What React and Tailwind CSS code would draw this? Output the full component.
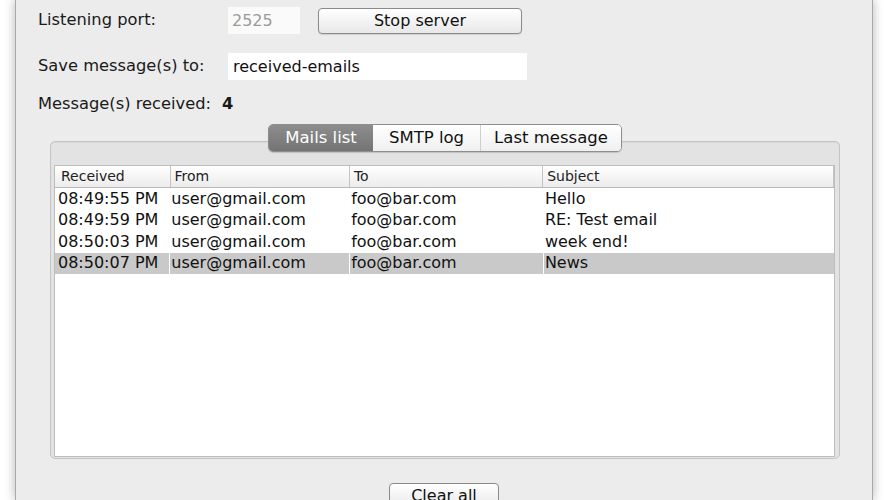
const font = { fontFamily: '"DejaVu Sans", "Liberation Sans", sans-serif' };

const columns = [
  { key: "received", title: "Received", width: "w-[115px]" },
  { key: "from", title: "From", width: "w-[180px]" },
  { key: "to", title: "To", width: "w-[194px]" },
  { key: "subject", title: "Subject", width: "w-[292px]" },
];

const mails = [
  { received: "08:49:55 PM", from: "user@gmail.com", to: "foo@bar.com", subject: "Hello" },
  { received: "08:49:59 PM", from: "user@gmail.com", to: "foo@bar.com", subject: "RE: Test email" },
  { received: "08:50:03 PM", from: "user@gmail.com", to: "foo@bar.com", subject: "week end!" },
  { received: "08:50:07 PM", from: "user@gmail.com", to: "foo@bar.com", subject: "News", selected: true },
];

function MailsTable() {
  return (
    <div className="mx-[3px] mr-[4px] mt-[22px] h-[292px] border border-[#bdbdbd] bg-white">
      <div className="flex h-[22px] border-b border-[#b8b8b8] bg-gradient-to-b from-white to-[#ececec] text-[14px] text-[#222]">
        {columns.map((col, i) => (
          <div
            key={col.key}
            className={`${col.width} flex items-center ${i === 0 ? "pl-[6px]" : "border-l border-[#c4c4c4] pl-[4px]"}`}
          >
            {col.title}
          </div>
        ))}
        <div className="flex-1 border-l border-[#c4c4c4]" />
      </div>
      {mails.map((mail) => (
        <div key={mail.received} className="flex h-[21.5px] text-[16px] text-[#111]">
          {columns.map((col, i) => (
            <div
              key={col.key}
              className={`${col.width} flex items-center ${mail.selected ? "bg-[#c9c9c9]" : ""} ${i === 0 ? "pl-[3px]" : "ml-px pl-[2px]"}`}
            >
              <span className={i === 0 ? "" : "-ml-px"}>{mail[col.key]}</span>
            </div>
          ))}
        </div>
      ))}
    </div>
  );
}

function Tabs() {
  const tabs = ["Mails list", "SMTP log", "Last message"];
  return (
    <div className="relative z-10 -mb-[11px] flex justify-center">
      <div className="flex h-[28px] overflow-hidden rounded-[5px] border border-[#8e8e8e] text-[16.5px] shadow-[0_1px_1px_rgba(0,0,0,0.15)]">
        {tabs.map((tab, i) => (
          <div
            key={tab}
            className={
              i === 0
                ? "flex w-[104px] items-center justify-center bg-gradient-to-b from-[#8d8d8d] to-[#747474] text-white"
                : `flex items-center justify-center bg-gradient-to-b from-white to-[#f0f0f0] text-[#111] ${
                    i === 1 ? "w-[107px]" : "w-[141px] border-l border-[#cfcfcf]"
                  }`
            }
          >
            {tab}
          </div>
        ))}
      </div>
    </div>
  );
}

export default function App() {
  return (
    <div className="h-[500px] w-[888px] overflow-hidden bg-white" style={font}>
      <div className="ml-[15px] h-[500px] w-[858px] border-x border-[#a9a9a9] bg-[#ececec] shadow-[0_0_10px_rgba(0,0,0,0.3)]">
        <div className="pl-[22px] pt-[7px] text-[16.3px] text-[#1a1a1a]">
          <div className="flex h-[27px] items-center">
            <div className="w-[190px]">Listening port:</div>
            <div className="flex h-[27px] w-[72px] items-center bg-[#fafafa] pl-[4px] text-[16px] text-[#9b9b9b]">
              2525
            </div>
            <button className="ml-[18px] mt-[1px] h-[26px] w-[204px] rounded-[4px] border border-[#8a8a8a] bg-gradient-to-b from-white to-[#e8e8e8] text-[16px] text-[#111] shadow-[0_1px_1px_rgba(0,0,0,0.12)]">
              Stop server
            </button>
          </div>
          <div className="mt-[19px] flex h-[27px] items-center">
            <div className="w-[190px]">Save message(s) to:</div>
            <div className="flex h-[27px] w-[299px] items-center bg-white pl-[5px] text-[16px] text-[#111]">
              received-emails
            </div>
          </div>
          <div className="mt-[13px] flex h-[22px] items-center">
            <span>Message(s) received:</span>
            <span className="ml-[11px] font-bold">4</span>
          </div>
        </div>
        <div className="mt-[9px] px-[34px] pr-[32px]">
          <Tabs />
          <div className="h-[318px] rounded-[5px] border border-[#c4c4c4] bg-[#e3e3e3] pt-px shadow-[inset_0_1px_1px_rgba(0,0,0,0.05)]">
            <MailsTable />
          </div>
        </div>
        <div className="mt-[24px] flex justify-center">
          <button className="h-[26px] w-[110px] rounded-[4px] border border-[#8a8a8a] bg-gradient-to-b from-white to-[#e8e8e8] text-[16px] text-[#111]">
            Clear all
          </button>
        </div>
      </div>
    </div>
  );
}
